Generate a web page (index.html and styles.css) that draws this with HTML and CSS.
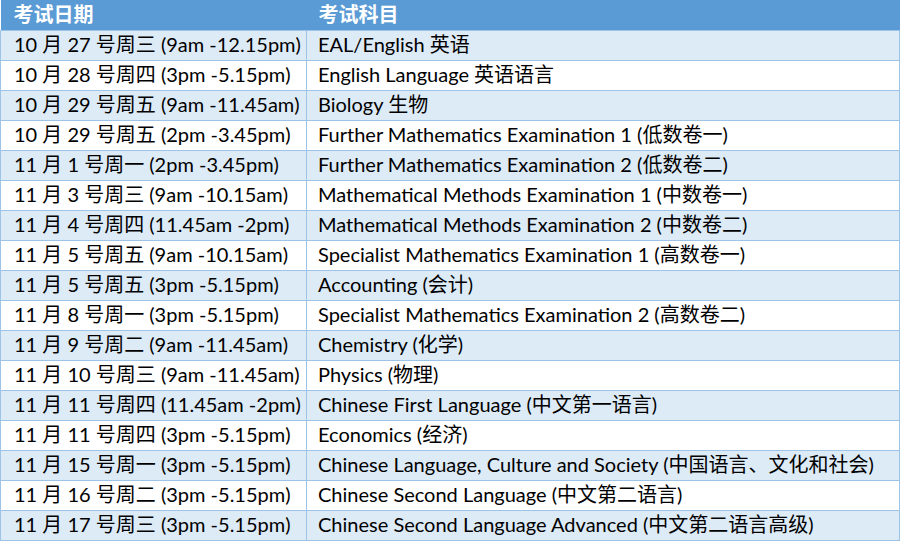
FILE: index.html
```html
<!DOCTYPE html>
<html lang="zh">
<head>
<meta charset="utf-8">
<link rel="stylesheet" href="styles.css">
</head>
<body>
<table class="exam">
<thead>
<tr><th class="c1">考试日期</th><th class="c2">考试科目</th></tr>
</thead>
<tbody>
<tr><td>10 月 27 号周三 (9am -12.15pm)</td><td>EAL/English 英语</td></tr>
<tr><td>10 月 28 号周四 (3pm -5.15pm)</td><td>English Language 英语语言</td></tr>
<tr><td>10 月 29 号周五 (9am -11.45am)</td><td>Biology 生物</td></tr>
<tr><td>10 月 29 号周五 (2pm -3.45pm)</td><td>Further Mathematics Examination 1 (低数卷一)</td></tr>
<tr><td>11 月 1 号周一 (2pm -3.45pm)</td><td>Further Mathematics Examination 2 (低数卷二)</td></tr>
<tr><td>11 月 3 号周三 (9am -10.15am)</td><td>Mathematical Methods Examination 1 (中数卷一)</td></tr>
<tr><td>11 月 4 号周四 (11.45am -2pm)</td><td>Mathematical Methods Examination 2 (中数卷二)</td></tr>
<tr><td>11 月 5 号周五 (9am -10.15am)</td><td>Specialist Mathematics Examination 1 (高数卷一)</td></tr>
<tr><td>11 月 5 号周五 (3pm -5.15pm)</td><td>Accounting (会计)</td></tr>
<tr><td>11 月 8 号周一 (3pm -5.15pm)</td><td>Specialist Mathematics Examination 2 (高数卷二)</td></tr>
<tr><td>11 月 9 号周二 (9am -11.45am)</td><td>Chemistry (化学)</td></tr>
<tr><td>11 月 10 号周三 (9am -11.45am)</td><td>Physics (物理)</td></tr>
<tr><td>11 月 11 号周四 (11.45am -2pm)</td><td>Chinese First Language (中文第一语言)</td></tr>
<tr><td>11 月 11 号周四 (3pm -5.15pm)</td><td>Economics (经济)</td></tr>
<tr><td>11 月 15 号周一 (3pm -5.15pm)</td><td>Chinese Language, Culture and Society (中国语言、文化和社会)</td></tr>
<tr><td>11 月 16 号周二 (3pm -5.15pm)</td><td>Chinese Second Language (中文第二语言)</td></tr>
<tr><td>11 月 17 号周三 (3pm -5.15pm)</td><td>Chinese Second Language Advanced (中文第二语言高级)</td></tr>
</tbody>
</table>
</body>
</html>
```
FILE: styles.css
```css
html, body {
  margin: 0;
  padding: 0;
  background: #ffffff;
}
.exam {
  border-collapse: collapse;
  width: 900px;
  table-layout: fixed;
  font-family: Lato, "Noto Sans CJK SC", sans-serif;
  font-size: 20px;
  color: #000;
}
.exam th {
  background: #5b9bd5;
  color: #ffffff;
  font-weight: bold;
  text-align: left;
  height: 30px;
  padding: 0 0 0 13px;
  box-sizing: border-box;
  line-height: 28px;
  vertical-align: top;
}
.exam th.c1 { width: 306px; }
.exam th.c2 { padding-left: 12px; }
.exam td {
  height: 30px;
  box-sizing: border-box;
  padding: 0 0 0 11px;
  border: 1px solid #9dc3e6;
  white-space: nowrap;
  overflow: hidden;
  line-height: 27px;
  vertical-align: top;
}
.exam tbody tr:nth-child(odd) td {
  background: #ddebf7;
}
.exam tbody tr:nth-child(even) td {
  background: #ffffff;
}
.exam td:first-child { padding-left: 13px; }
```
